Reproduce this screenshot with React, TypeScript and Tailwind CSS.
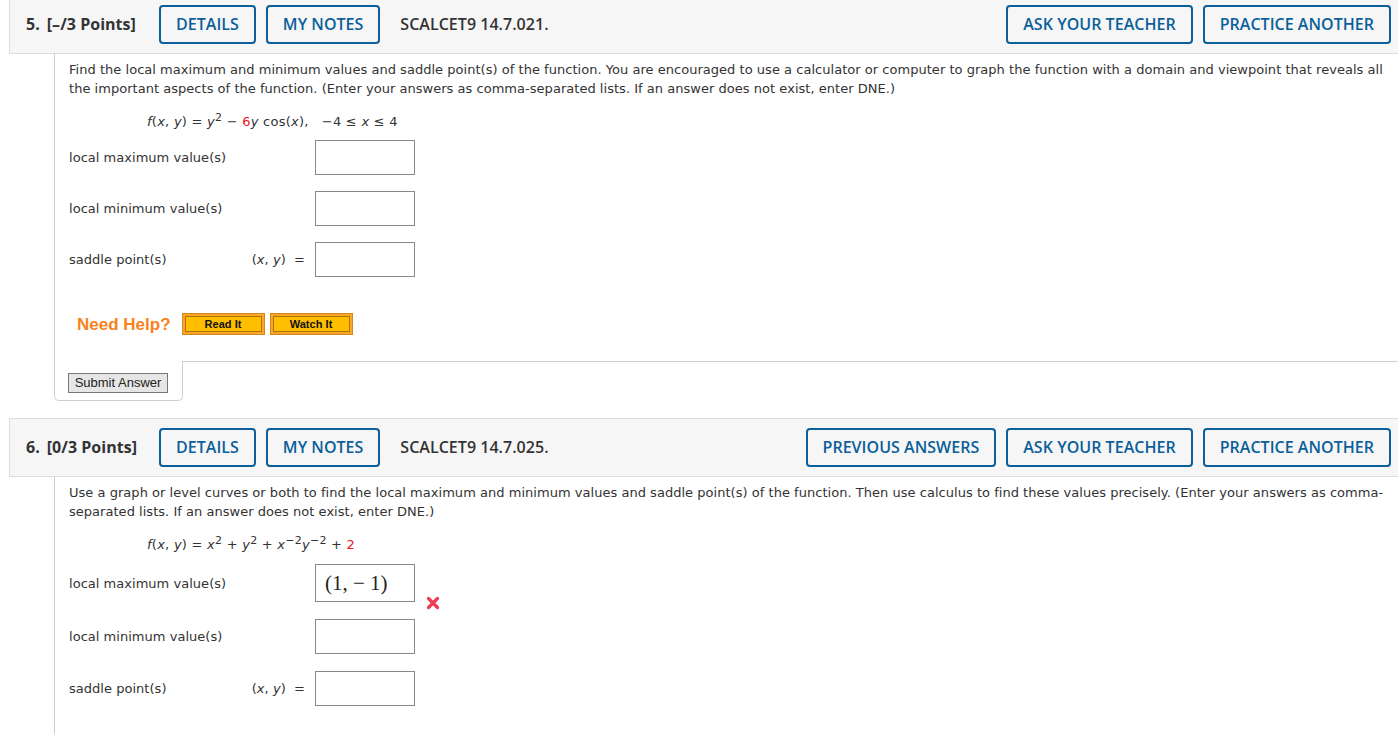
import React from "react";

const headerBtn =
  "h-[39px] px-[15px] border-2 border-[#0b5f9a] rounded-[4px] text-[#0b5f9a] font-semibold text-[16px] flex items-center bg-[#f6f6f6] whitespace-nowrap";

const QuestionHeader: React.FC<{ num: string; points: string; code: string; prev?: boolean }> = ({
  num,
  points,
  code,
  prev,
}) => (
  <div
    className="ml-[9px] mr-[-4px] flex items-center justify-between border border-[#dcdcdc] bg-[#f6f6f6] py-[9px] pl-[16px] pr-[10px]"
    style={{ fontFamily: "'Open Sans', sans-serif" }}
  >
    <div className="flex items-center">
      <span className="font-bold text-[16px] text-[#333] w-[113px] whitespace-nowrap">
        {num}
        <span className="ml-[7px]">{points}</span>
      </span>
      <button className={headerBtn + " ml-[20px]"}>DETAILS</button>
      <button className={headerBtn + " ml-[10px]"}>MY NOTES</button>
      <span className="ml-[20px] font-semibold text-[16px] text-[#333]">{code}</span>
    </div>
    <div className="flex items-center gap-[10px]">
      {prev && <button className={headerBtn}>PREVIOUS ANSWERS</button>}
      <button className={headerBtn}>ASK YOUR TEACHER</button>
      <button className={headerBtn}>PRACTICE ANOTHER</button>
    </div>
  </div>
);

const AnswerRow: React.FC<{ label: string; xy?: boolean; value?: React.ReactNode; wrong?: boolean; tall?: boolean }> = ({
  label,
  xy,
  value,
  wrong,
  tall,
}) => (
  <div className="flex items-start">
    <div className="w-[246px] self-center flex items-center justify-between">
      <span>{label}</span>
      {xy && (
        <span className="mr-[10px]">
          (<i>x</i>, <i>y</i>)&nbsp;&nbsp;=
        </span>
      )}
    </div>
    <div
      className={
        "w-[100px] border border-[#888] bg-white flex items-center pl-[9px] " + (tall ? "h-[38px]" : "h-[35px]")
      }
    >
      {value}
    </div>
    {wrong && (
      <svg className="ml-[11px] mt-[32px] mb-[-8px]" width="14" height="14" viewBox="0 0 14 14">
        <path d="M2.5 2.5 L11.5 11.5 M11.5 2.5 L2.5 11.5" stroke="#f03a50" strokeWidth="3.2" strokeLinecap="round" />
      </svg>
    )}
  </div>
);

const HelpButton: React.FC<{ label: string }> = ({ label }) => (
  <div className="w-[83px] h-[22px] border border-[#d9861f] bg-[#f9a825] p-[2px]">
    <div
      className="h-full border border-[#b86d0c] bg-[#ffbf00] flex items-center justify-center text-[11px] font-bold text-[#111]"
      style={{ fontFamily: "'Liberation Sans', Arial, sans-serif" }}
    >
      {label}
    </div>
  </div>
);

const App: React.FC = () => {
  return (
    <div
      className="w-[1398px] h-[734px] overflow-hidden bg-white text-[#333] text-[13px] leading-[19px] tracking-[0.03px]"
      style={{ fontFamily: "'DejaVu Sans', Verdana, sans-serif" }}
    >
      <div className="mt-[-5px]">
        <QuestionHeader num="5." points="[–/3 Points]" code="SCALCET9 14.7.021." />
      </div>
      <div className="ml-[54px]">
        <div className="border-l border-[#cfcfcf] pl-[14px] pt-[6px]">
          <p className="whitespace-nowrap">
            Find the local maximum and minimum values and saddle point(s) of the function. You are encouraged to use a
            calculator or computer to graph the function with a domain and viewpoint that reveals all
            <br />
            the important aspects of the function. (Enter your answers as comma-separated lists. If an answer does not
            exist, enter DNE.)
          </p>
          <p className="mt-[14px] ml-[78px] tracking-[0.25px]">
            <i>f</i>(<i>x</i>, <i>y</i>) = <i>y</i>
            <sup className="text-[11px]">2</sup> − <span className="text-[#e8141a]">6</span>
            <i>y</i> cos(<i>x</i>),&nbsp;&nbsp; −4 ≤ <i>x</i> ≤ 4
          </p>
          <div className="mt-[9px] flex flex-col gap-[16px]">
            <AnswerRow label="local maximum value(s)" />
            <AnswerRow label="local minimum value(s)" />
            <AnswerRow label="saddle point(s)" xy />
          </div>
          <div className="mt-[36px] ml-[8px] flex items-center pb-[26px]">
            <span
              className="text-[17px] font-bold text-[#f7821b] mr-[11px] tracking-normal"
              style={{ fontFamily: "'Liberation Sans', Arial, sans-serif" }}
            >
              Need Help?
            </span>
            <HelpButton label="Read It" />
            <div className="w-[5px]" />
            <HelpButton label="Watch It" />
          </div>
        </div>
        <div className="flex">
          <div className="w-[129px] h-[40px] border-l border-b border-r border-[#cfcfcf] rounded-b-[5px] pl-[13px] pt-[12px]">
            <button
              className="h-[20px] w-[100px] border border-[#777] bg-[#e6e6e6] text-[13px] text-[#222] leading-[18px] tracking-normal"
              style={{ fontFamily: "'Liberation Sans', Arial, sans-serif" }}
            >
              Submit Answer
            </button>
          </div>
          <div className="flex-1 border-t border-[#cfcfcf]" />
        </div>
      </div>

      <div className="mt-[17px]">
        <QuestionHeader num="6." points="[0/3 Points]" code="SCALCET9 14.7.025." prev />
      </div>
      <div className="ml-[54px] border-l border-[#cfcfcf] pl-[14px] pt-[6px] pb-[40px]">
        <p className="whitespace-nowrap">
          Use a graph or level curves or both to find the local maximum and minimum values and saddle point(s) of the
          function. Then use calculus to find these values precisely. (Enter your answers as comma-
          <br />
          separated lists. If an answer does not exist, enter DNE.)
        </p>
        <p className="mt-[14px] ml-[78px] tracking-[0.25px]">
          <i>f</i>(<i>x</i>, <i>y</i>) = <i>x</i>
          <sup className="text-[11px]">2</sup> + <i>y</i>
          <sup className="text-[11px]">2</sup> + <i>x</i>
          <sup className="text-[11px]">−2</sup>
          <i>y</i>
          <sup className="text-[11px]">−2</sup> + <span className="text-[#e8141a]">2</span>
        </p>
        <div className="mt-[10px] flex flex-col gap-[17px]">
          <AnswerRow
            label="local maximum value(s)"
            tall
            wrong
            value={
              <span
                className="text-[21px] text-[#222] tracking-normal"
                style={{ fontFamily: "'Liberation Serif', 'Times New Roman', serif" }}
              >
                (1, − 1)
              </span>
            }
          />
          <AnswerRow label="local minimum value(s)" />
          <AnswerRow label="saddle point(s)" xy />
        </div>
      </div>
    </div>
  );
};

export default App;
